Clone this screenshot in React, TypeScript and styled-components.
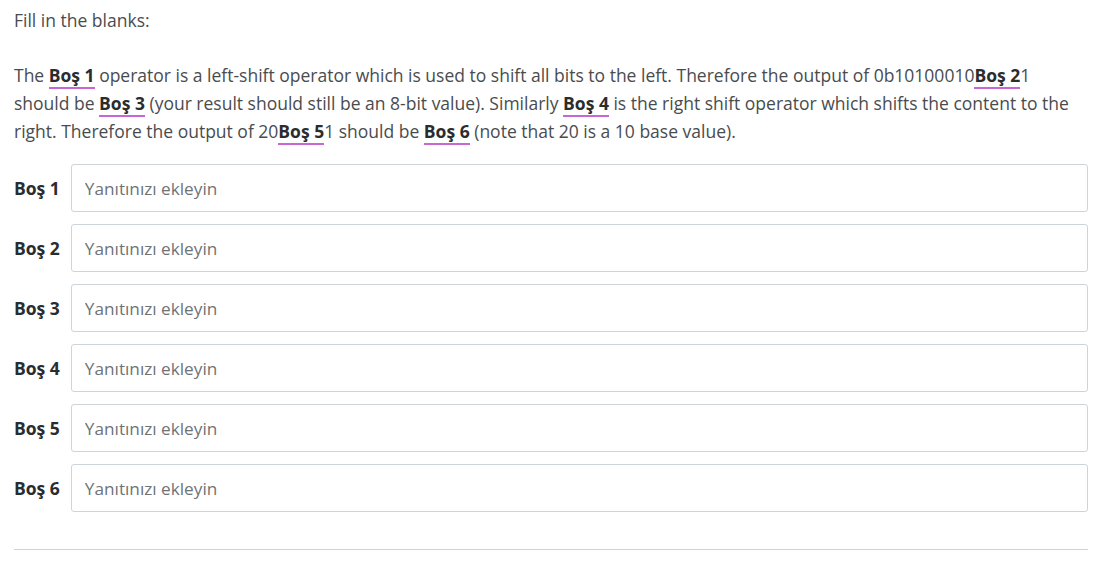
import React from "react";
import styled, { createGlobalStyle } from "styled-components";

const Global = createGlobalStyle`
  html, body { margin: 0; padding: 0; background: #fff; }
  body { font-family: "Open Sans", "Noto Sans", sans-serif; color: #494c4e; }
`;

const Page = styled.div`
  padding: 6px 19px 0 14px;
  display: flex;
  flex-direction: column;
`;

const Intro = styled.div`
  font-size: 17.5px;
  line-height: 28px;
  margin-bottom: 27px;
`;

const Paragraph = styled.p`
  margin: 0 0 19px;
  font-size: 17.5px;
  line-height: 28px;
`;

const Blank = styled.span`
  font-weight: 700;
  color: #2a2c2e;
  border-bottom: 2px solid #c866d4;
`;

const Rows = styled.div`
  display: flex;
  flex-direction: column;
  gap: 12px;
`;

const Row = styled.div`
  display: flex;
  align-items: center;
  gap: 11px;
`;

const Label = styled.label`
  font-size: 17.5px;
  font-weight: 700;
  color: #2a2c2e;
  white-space: nowrap;
`;

const Input = styled.input`
  flex: 1;
  height: 48px;
  box-sizing: border-box;
  border: 1px solid #cdd5dc;
  border-radius: 3px;
  padding: 0 13px;
  font-family: "Open Sans", "Noto Sans", sans-serif;
  font-size: 17.2px;
  color: #494c4e;
  outline: none;
  &::placeholder { color: #6e7376; }
`;

const Divider = styled.hr`
  margin: 37px 0 0;
  border: none;
  border-top: 1px solid #cdd5dc;
`;

export default function App() {
  return (
    <>
      <Global />
      <Page>
        <Intro>Fill in the blanks:</Intro>
        <Paragraph>
          The <Blank>Boş 1</Blank> operator is a left-shift operator which is used to shift all bits to the left. Therefore the output of 0b10100010<Blank>Boş 2</Blank>1 should be <Blank>Boş 3</Blank> (your result should still be an 8-bit value). Similarly <Blank>Boş 4</Blank> is the right shift operator which shifts the content to the right. Therefore the output of 20<Blank>Boş 5</Blank>1 should be <Blank>Boş 6</Blank> (note that 20 is a 10 base value).
        </Paragraph>
        <Rows>
          {[1, 2, 3, 4, 5, 6].map((n) => (
            <Row key={n}>
              <Label htmlFor={`b${n}`}>Boş {n}</Label>
              <Input id={`b${n}`} placeholder="Yanıtınızı ekleyin" />
            </Row>
          ))}
        </Rows>
        <Divider />
      </Page>
    </>
  );
}
